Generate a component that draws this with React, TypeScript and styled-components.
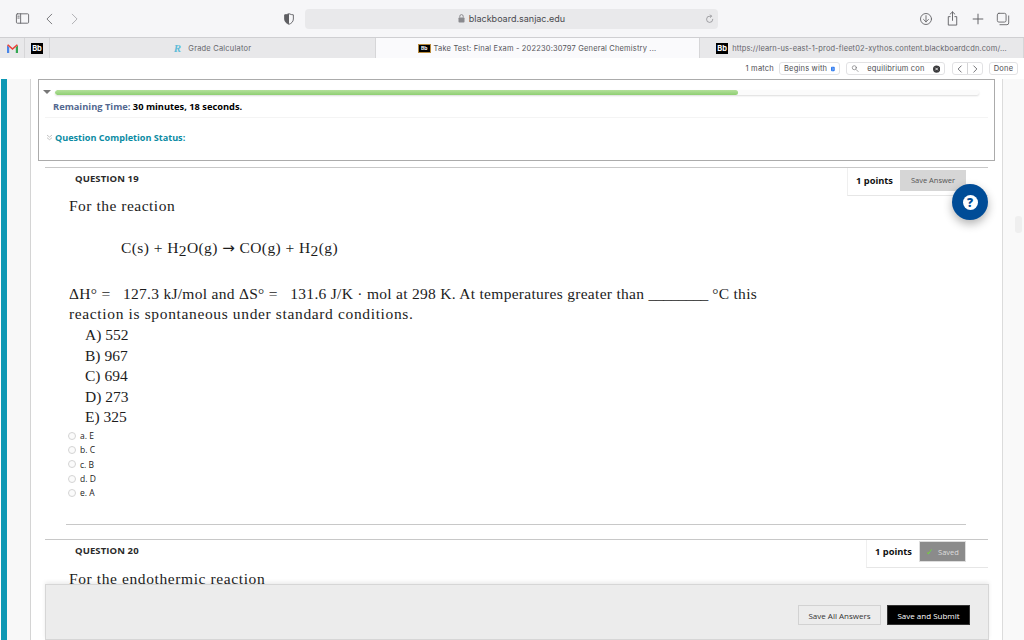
import styled, { createGlobalStyle } from "styled-components";

const GlobalStyle = createGlobalStyle`
  html, body {
    margin: 0;
    padding: 0;
    background: #fff;
  }
  * {
    box-sizing: border-box;
  }
`;

const SANS = `"Open Sans", "Noto Sans", sans-serif`;
const SERIF = `"Liberation Serif", "DejaVu Serif", serif`;
const UI = `Inter, "Liberation Sans", sans-serif`;

const Page = styled.div`
  width: 1024px;
  height: 640px;
  overflow: hidden;
  display: flex;
  flex-direction: column;
`;

const Toolbar = styled.div`
  height: 37px;
  flex: none;
  background: #f6f6f8;
  display: flex;
  align-items: center;
  padding: 0 0 0 15px;
  color: #6a6a6e;
`;

const NavIcons = styled.div`
  display: flex;
  align-items: center;
  gap: 10px;
  margin-left: 13px;
`;

const ForwardIcon = styled.span`
  display: flex;
  color: #a8a8ac;
`;

const ShieldSlot = styled.div`
  margin-left: 203px;
  display: flex;
  width: 21px;
`;

const AddressBar = styled.div`
  width: 413px;
  height: 20px;
  border-radius: 4px;
  background: #e9e9eb;
  display: flex;
  align-items: center;
  justify-content: center;
  position: relative;
  font: 9px ${UI};
  color: #4a4a4e;
  gap: 4px;
`;

const ReloadSlot = styled.span`
  position: absolute;
  right: 3px;
  top: 5px;
  display: flex;
  color: #77777b;
`;

const RightIcons = styled.div`
  margin-left: 201px;
  display: flex;
  align-items: center;
  gap: 12px;
  color: #626266;
`;

const TabStrip = styled.div`
  height: 21px;
  flex: none;
  display: flex;
  background: #e8e8ea;
  border-top: 1px solid #cfcfd2;
  font: 7.5px ${UI};
  color: #66666a;
`;

const PinnedTab = styled.div`
  width: 25px;
  display: flex;
  align-items: center;
  justify-content: center;
  border-right: 1px solid #d6d6d8;
`;

const Tab = styled.div<{ $active?: boolean; $width: number; $spacing: number }>`
  width: ${(p) => p.$width}px;
  display: flex;
  align-items: center;
  justify-content: center;
  gap: 4px;
  white-space: nowrap;
  background: ${(p) => (p.$active ? "#fafafc" : "#e8e8ea")};
  color: ${(p) => (p.$active ? "#55555a" : "#66666a")};
  letter-spacing: ${(p) => p.$spacing}px;
  border-right: 1px solid #d6d6d8;
`;

const BbBadge = styled.span<{ $small?: boolean }>`
  display: inline-flex;
  align-items: center;
  justify-content: center;
  width: ${(p) => (p.$small ? 11 : 12)}px;
  height: ${(p) => (p.$small ? 7 : 11)}px;
  background: #000;
  color: #fff;
  font: 700 ${(p) => (p.$small ? 5 : 7.5)}px ${UI};
  letter-spacing: 0;
  flex: none;
  outline: ${(p) => (p.$small ? "1px solid #b98b3c" : "none")};
`;

const RLogo = styled.span`
  font: italic 700 11px ${SERIF};
  color: #5fbcd8;
  margin-right: 3px;
`;

const FindBar = styled.div`
  height: 21px;
  flex: none;
  background: #fff;
  display: flex;
  align-items: center;
  justify-content: flex-end;
  padding-right: 6px;
  font: 7.5px ${UI};
  color: #4c4c50;
  letter-spacing: 0.2px;
`;

const FindBox = styled.div<{ $width: number; $ml: number; $center?: boolean; $flush?: boolean }>`
  width: ${(p) => p.$width}px;
  height: 13px;
  margin-left: ${(p) => p.$ml}px;
  border: 1px solid #e2e2e4;
  border-radius: 3px;
  display: flex;
  align-items: center;
  justify-content: ${(p) => (p.$center ? "center" : "flex-start")};
  padding: 0 ${(p) => (p.$flush ? 0 : 4)}px;
  gap: ${(p) => (p.$flush ? 0 : 4)}px;
  background: #fff;
  white-space: nowrap;
`;

const SearchText = styled.span`
  width: 72px;
  overflow: hidden;
  padding-left: 4px;
`;

const StepperBtn = styled.span`
  width: 15px;
  height: 100%;
  display: flex;
  align-items: center;
  justify-content: center;
  color: #55555a;
  & + & {
    border-left: 1px solid #d4d4d6;
  }
`;

const Body = styled.div`
  flex: 1;
  min-height: 0;
  display: flex;
  background: #fff;
`;

const Rail = styled.div`
  width: 6px;
  margin-left: 1px;
  flex: none;
  background: #0e98b4;
`;

const Gutter = styled.div`
  width: 24px;
  flex: none;
  background: #f8f8f8;
  border-right: 1px solid #d4d4d4;
`;

const Main = styled.div`
  width: 971px;
  flex: none;
  position: relative;
  overflow: hidden;
  padding: 0 7px;
`;

const RightStrip = styled.div`
  flex: 1;
  background: #f9f9f9;
  border-left: 1px solid #dcdcdc;
  position: relative;
`;

const ScrollThumb = styled.div`
  position: absolute;
  right: 2px;
  top: 137px;
  width: 7px;
  height: 17px;
  background: #efefef;
  border-radius: 3px;
`;

const Panel = styled.div`
  height: 82px;
  border: 1px solid #ababab;
  background: #fff;
  padding: 0 6px;
  position: relative;
`;

const ProgressRow = styled.div`
  display: flex;
  align-items: center;
  height: 19px;
  margin-left: -6px;
  padding: 5px 9px 0 4px;
  gap: 4px;
`;

const Caret = styled.span`
  width: 0;
  height: 0;
  border-left: 4px solid transparent;
  border-right: 4px solid transparent;
  border-top: 4px solid #777;
  flex: none;
`;

const Track = styled.div`
  flex: 1;
  height: 5px;
  border-radius: 3px;
  background: #fbfbfb;
  box-shadow: 0 1px 2px rgba(0, 0, 0, 0.14);
  overflow: hidden;
`;

const Fill = styled.div`
  height: 100%;
  background: linear-gradient(#b4e09c, #8fcf72);
  border-radius: 3px;
`;

const TimeRow = styled.div`
  height: 19px;
  padding: 0 0 0 8px;
  border-bottom: 1px solid #f4f4f4;
  font: 700 9.3px/15px ${SANS};
  color: #000;
`;

const TimeLabel = styled.span`
  color: #53688f;
`;

const StatusRow = styled.div`
  display: flex;
  align-items: center;
  gap: 2px;
  height: 39px;
  padding: 0 0 0 1px;
  font: 700 9.1px ${SANS};
  color: #0b8ba3;
`;

const Question = styled.div`
  margin: 6px 7px 0;
`;

const QuestionHead = styled.div`
  display: flex;
  justify-content: space-between;
  align-items: flex-start;
  height: 28px;
  border-top: 1px solid #c8c8c8;
`;

const QuestionTitle = styled.div`
  padding: 3px 0 0 30px;
  font: 700 9.5px/15px ${SANS};
  letter-spacing: 0.1px;
  color: #2a2a2a;
`;

const Points = styled.div`
  height: 28px;
  display: flex;
  align-items: center;
  padding: 0 22px 3px 8px;
  gap: 7px;
  border-left: 1px solid #efefef;
  border-bottom: 1px solid #e6e6e6;
  font: 700 9.3px ${SANS};
  color: #111;
`;

const SaveButton = styled.div<{ $saved?: boolean }>`
  width: ${(p) => (p.$saved ? 47 : 66)}px;
  height: 21px;
  display: flex;
  align-items: center;
  justify-content: center;
  gap: 4px;
  font: 400 7.5px ${SANS};
  background: ${(p) => (p.$saved ? "#8b8b8b" : "#d6d6d6")};
  color: ${(p) => (p.$saved ? "#ddd" : "#555")};
  border: ${(p) => (p.$saved ? "1px solid #ddd" : "none")};
`;

const Check = styled.span`
  color: #6fd23c;
  font-size: 9px;
`;

const Content = styled.div`
  padding: 0 0 0 24px;
  font-family: ${SERIF};
  color: #1c1c1c;
  font-size: 15.5px;
`;

const Lead = styled.div`
  height: 20px;
  line-height: 20px;
  margin-top: 1px;
  letter-spacing: 0.5px;
`;

const NextLead = styled(Lead)`
  margin-top: 2px;
  letter-spacing: 0.6px;
`;

const Equation = styled.div`
  margin: 22px 0 0 52px;
  height: 20px;
  line-height: 20px;
  white-space: nowrap;
  letter-spacing: 0.42px;
  sub {
    font-size: 15.5px;
    line-height: 0;
    vertical-align: -3px;
  }
`;

const Arrow = styled.span`
  font-family: "DejaVu Sans", sans-serif;
  font-size: 15px;
`;

const Paragraph = styled.div`
  margin-top: 26px;
  line-height: 20px;
  white-space: nowrap;
`;

const ParagraphLine = styled.div<{ $spacing: number }>`
  letter-spacing: ${(p) => p.$spacing}px;
`;

const Blank = styled.span`
  letter-spacing: -0.3px;
`;

const Choices = styled.div`
  margin: 1px 0 0 16px;
  line-height: 20.5px;
`;

const Answers = styled.div`
  margin-top: 1px;
  padding-left: 23px;
`;

const AnswerRow = styled.label`
  display: flex;
  align-items: center;
  height: 14.3px;
  gap: 4px;
  font: 400 8.5px ${SANS};
  color: #222;
`;

const Radio = styled.span`
  width: 8px;
  height: 8px;
  border-radius: 50%;
  border: 1px solid #d4d4d4;
  background: #fbfbfb;
  flex: none;
`;

const QuestionEnd = styled.div`
  margin: 24px 22px 0 21px;
  border-top: 1px solid #c8c8c8;
`;

const NextQuestion = styled(Question)`
  margin-top: 14px;
`;

const HelpFab = styled.div`
  position: absolute;
  left: 921px;
  top: 105px;
  width: 36px;
  height: 36px;
  border-radius: 50%;
  background: #004c97;
  box-shadow: 0 4px 10px rgba(0, 0, 0, 0.3);
  display: flex;
  align-items: center;
  justify-content: center;
`;

const HelpDisc = styled.span`
  width: 15px;
  height: 15px;
  border-radius: 50%;
  background: #fff;
  color: #004c97;
  display: flex;
  align-items: center;
  justify-content: center;
  font: 800 12px ${SANS};
`;

const SubmitBar = styled.div`
  position: absolute;
  left: 14px;
  top: 505px;
  width: 944px;
  height: 56px;
  background: #ececec;
  border: 1px solid #d6d6d6;
  box-shadow: 0 -2px 4px rgba(0, 0, 0, 0.08);
  display: flex;
  align-items: flex-start;
  justify-content: flex-end;
  gap: 6px;
  padding: 20px 18px 0 0;
`;

const BarButton = styled.div<{ $primary?: boolean }>`
  width: 83px;
  height: 20px;
  display: flex;
  align-items: center;
  justify-content: center;
  font: 400 8px ${SANS};
  background: ${(p) => (p.$primary ? "#000" : "#ececec")};
  color: ${(p) => (p.$primary ? "#fff" : "#333")};
  border: 1px solid ${(p) => (p.$primary ? "#333" : "#d2d2d2")};
`;

const Stroke = ({ size, children, w = 1 }: { size: number; children: React.ReactNode; w?: number }) => (
  <svg width={size} height={size} viewBox="0 0 16 16" fill="none" stroke="currentColor" strokeWidth={w} strokeLinecap="round" strokeLinejoin="round">
    {children}
  </svg>
);

const GmailIcon = () => (
  <svg width="11" height="9" viewBox="0 0 11 9">
    <path d="M0 1.2 V9 H2.2 V3.2 Z" fill="#4a86e8" />
    <path d="M11 1.2 V9 H8.8 V3.2 Z" fill="#34a853" />
    <path d="M0 1.2 L1.2 0.3 L5.5 4 L9.8 0.3 L11 1.2 L5.5 6 Z" fill="#e8453c" />
  </svg>
);

const answers = ["a. E", "b. C", "c. B", "d. D", "e. A"];
const choices = ["A) 552", "B) 967", "C) 694", "D) 273", "E) 325"];

export default function App() {
  return (
    <Page>
      <GlobalStyle />
      <Toolbar>
        <Stroke size={15}>
          <rect x="1.5" y="3" width="13" height="10" rx="1" />
          <path d="M6 3 V13 M3 5.5 H4.5 M3 7.5 H4.5" />
        </Stroke>
        <NavIcons>
          <Stroke size={14}>
            <path d="M10 2.5 L4.5 8 L10 13.5" />
          </Stroke>
          <ForwardIcon>
            <Stroke size={14}>
              <path d="M6 2.5 L11.5 8 L6 13.5" />
            </Stroke>
          </ForwardIcon>
        </NavIcons>
        <ShieldSlot>
          <svg width="10" height="12" viewBox="0 0 11 13">
            <path d="M5.5 0.7 C3.8 1.6 2 1.8 0.7 1.9 V6.5 C0.7 9.5 3 11.5 5.5 12.3 C8 11.5 10.3 9.5 10.3 6.5 V1.9 C9 1.8 7.2 1.6 5.5 0.7 Z" fill="#f6f6f8" stroke="#5e5e62" />
            <path d="M5.5 0.7 C3.8 1.6 2 1.8 0.7 1.9 V6.5 C0.7 9.5 3 11.5 5.5 12.3 Z" fill="#5e5e62" />
          </svg>
        </ShieldSlot>
        <AddressBar>
          <svg width="7" height="9" viewBox="0 0 7 9">
            <rect x="0.5" y="3.5" width="6" height="5" rx="0.8" fill="#8a8a8e" />
            <path d="M1.8 3.5 V2.3 A1.7 1.7 0 0 1 5.2 2.3 V3.5" fill="none" stroke="#8a8a8e" />
          </svg>
          blackboard.sanjac.edu
          <ReloadSlot>
            <Stroke size={10}>
              <path d="M12.5 8.5 A5 5 0 1 1 8 3.5 H10 M8.5 1.5 L10.5 3.5 L8.5 5.5" />
            </Stroke>
          </ReloadSlot>
        </AddressBar>
        <RightIcons>
          <Stroke size={14}>
            <circle cx="8" cy="8" r="6.3" />
            <path d="M8 4.2 V11.3 M5.2 8.5 L8 11.3 L10.8 8.5" />
          </Stroke>
          <Stroke size={15}>
            <path d="M5.5 6 H3.5 V15 H12.5 V6 H10.5 M8 10 V1 M5.5 3.3 L8 1 L10.5 3.3" />
          </Stroke>
          <Stroke size={12} w={1.3}>
            <path d="M8 1.5 V14.5 M1.5 8 H14.5" />
          </Stroke>
          <Stroke size={14}>
            <rect x="1.5" y="1.5" width="10" height="10" rx="1.8" />
            <path d="M4.5 14.5 H12.5 A2 2 0 0 0 14.5 12.5 V4.5" />
          </Stroke>
        </RightIcons>
      </Toolbar>
      <TabStrip>
        <PinnedTab>
          <GmailIcon />
        </PinnedTab>
        <PinnedTab>
          <BbBadge>Bb</BbBadge>
        </PinnedTab>
        <Tab $width={326} $spacing={0.2}>
          <RLogo>R</RLogo>Grade Calculator
        </Tab>
        <Tab $width={324} $active $spacing={0.17}>
          <BbBadge $small>Bb</BbBadge>Take Test: Final Exam - 202230:30797 General Chemistry ...
        </Tab>
        <Tab $width={324} $spacing={0.12}>
          <BbBadge>Bb</BbBadge>https://learn-us-east-1-prod-fleet02-xythos.content.blackboardcdn.com/...
        </Tab>
      </TabStrip>
      <FindBar>
        1 match
        <FindBox $width={61} $ml={5}>
          Begins with
          <svg width="7" height="8" viewBox="0 0 7 8">
            <rect width="7" height="8" rx="1.5" fill="#2f7bf0" />
            <path d="M2 3.2 L3.5 1.8 L5 3.2 M2 4.8 L3.5 6.2 L5 4.8" stroke="#fff" fill="none" strokeWidth="0.8" />
          </svg>
        </FindBox>
        <FindBox $width={99} $ml={6}>
          <Stroke size={9}>
            <circle cx="6.5" cy="6.5" r="4" />
            <path d="M10 10 L14 14" />
          </Stroke>
          <SearchText>equilibrium con</SearchText>
          <svg width="8" height="8" viewBox="0 0 8 8">
            <circle cx="4" cy="4" r="4" fill="#3a3a3c" />
            <path d="M2.6 2.6 L5.4 5.4 M5.4 2.6 L2.6 5.4" stroke="#fff" strokeWidth="0.9" />
          </svg>
        </FindBox>
        <FindBox $width={31} $ml={7} $flush>
          <StepperBtn>
            <Stroke size={10} w={1.3}>
              <path d="M10 3 L5 8 L10 13" />
            </Stroke>
          </StepperBtn>
          <StepperBtn>
            <Stroke size={10} w={1.3}>
              <path d="M6 3 L11 8 L6 13" />
            </Stroke>
          </StepperBtn>
        </FindBox>
        <FindBox $width={29} $ml={6} $center>
          Done
        </FindBox>
      </FindBar>
      <Body>
        <Rail />
        <Gutter />
        <Main>
          <Panel>
            <ProgressRow>
              <Caret />
              <Track>
                <Fill style={{ width: `${(683 / 924) * 100}%` }} />
              </Track>
            </ProgressRow>
            <TimeRow>
              <TimeLabel>Remaining Time:</TimeLabel> 30 minutes, 18 seconds.
            </TimeRow>
            <StatusRow>
              <Stroke size={7} w={1.6}>
                <path d="M3 3 L8 7 L13 3 M3 9 L8 13 L13 9" stroke="#aaa" />
              </Stroke>
              Question Completion Status:
            </StatusRow>
          </Panel>
          <Question>
            <QuestionHead>
              <QuestionTitle>QUESTION 19</QuestionTitle>
              <Points>
                1 points
                <SaveButton>Save Answer</SaveButton>
              </Points>
            </QuestionHead>
            <Content>
              <Lead>For the reaction</Lead>
              <Equation>
                C(s) + H<sub>2</sub>O(g) <Arrow>→</Arrow> CO(g) + H<sub>2</sub>(g)
              </Equation>
              <Paragraph>
                <ParagraphLine $spacing={0.29}>
                  ΔH° =&nbsp;&nbsp; 127.3 kJ/mol and ΔS° =&nbsp;&nbsp; 131.6 J/K · mol at 298 K. At temperatures greater than <Blank>________</Blank> °C this
                </ParagraphLine>
                <ParagraphLine $spacing={0.64}>reaction is spontaneous under standard conditions.</ParagraphLine>
              </Paragraph>
              <Choices>
                {choices.map((c) => (
                  <div key={c}>{c}</div>
                ))}
              </Choices>
            </Content>
            <Answers>
              {answers.map((a) => (
                <AnswerRow key={a}>
                  <Radio />
                  {a}
                </AnswerRow>
              ))}
            </Answers>
            <QuestionEnd />
          </Question>
          <NextQuestion>
            <QuestionHead>
              <QuestionTitle>QUESTION 20</QuestionTitle>
              <Points>
                1 points
                <SaveButton $saved>
                  <Check>✓</Check>Saved
                </SaveButton>
              </Points>
            </QuestionHead>
            <Content>
              <NextLead>For the endothermic reaction</NextLead>
            </Content>
          </NextQuestion>
          <HelpFab>
            <HelpDisc>?</HelpDisc>
          </HelpFab>
          <SubmitBar>
            <BarButton>Save All Answers</BarButton>
            <BarButton $primary>Save and Submit</BarButton>
          </SubmitBar>
        </Main>
        <RightStrip>
          <ScrollThumb />
        </RightStrip>
      </Body>
    </Page>
  );
}
